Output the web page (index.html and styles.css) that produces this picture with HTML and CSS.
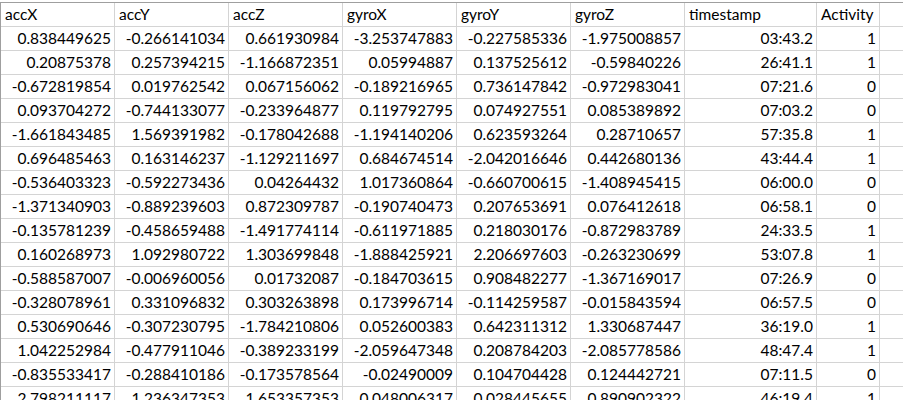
FILE: index.html
```html
<!DOCTYPE html>
<html>
<head>
<meta charset="utf-8">
<link rel="stylesheet" href="styles.css">
</head>
<body>
<div class="sheet">
  <div class="c h">accX</div><div class="c h">accY</div><div class="c h">accZ</div><div class="c h">gyroX</div><div class="c h">gyroY</div><div class="c h">gyroZ</div><div class="c h">timestamp</div><div class="c h">Activity</div><div class="c e"></div>

  <div class="c">0.838449625</div><div class="c">-0.266141034</div><div class="c">0.661930984</div><div class="c">-3.253747883</div><div class="c">-0.227585336</div><div class="c">-1.975008857</div><div class="c">03:43.2</div><div class="c">1</div><div class="c e"></div>

  <div class="c">0.20875378</div><div class="c">0.257394215</div><div class="c">-1.166872351</div><div class="c">0.05994887</div><div class="c">0.137525612</div><div class="c">-0.59840226</div><div class="c">26:41.1</div><div class="c">1</div><div class="c e"></div>

  <div class="c">-0.672819854</div><div class="c">0.019762542</div><div class="c">0.067156062</div><div class="c">-0.189216965</div><div class="c">0.736147842</div><div class="c">-0.972983041</div><div class="c">07:21.6</div><div class="c">0</div><div class="c e"></div>

  <div class="c">0.093704272</div><div class="c">-0.744133077</div><div class="c">-0.233964877</div><div class="c">0.119792795</div><div class="c">0.074927551</div><div class="c">0.085389892</div><div class="c">07:03.2</div><div class="c">0</div><div class="c e"></div>

  <div class="c">-1.661843485</div><div class="c">1.569391982</div><div class="c">-0.178042688</div><div class="c">-1.194140206</div><div class="c">0.623593264</div><div class="c">0.28710657</div><div class="c">57:35.8</div><div class="c">1</div><div class="c e"></div>

  <div class="c">0.696485463</div><div class="c">0.163146237</div><div class="c">-1.129211697</div><div class="c">0.684674514</div><div class="c">-2.042016646</div><div class="c">0.442680136</div><div class="c">43:44.4</div><div class="c">1</div><div class="c e"></div>

  <div class="c">-0.536403323</div><div class="c">-0.592273436</div><div class="c">0.04264432</div><div class="c">1.017360864</div><div class="c">-0.660700615</div><div class="c">-1.408945415</div><div class="c">06:00.0</div><div class="c">0</div><div class="c e"></div>

  <div class="c">-1.371340903</div><div class="c">-0.889239603</div><div class="c">0.872309787</div><div class="c">-0.190740473</div><div class="c">0.207653691</div><div class="c">0.076412618</div><div class="c">06:58.1</div><div class="c">0</div><div class="c e"></div>

  <div class="c">-0.135781239</div><div class="c">-0.458659488</div><div class="c">-1.491774114</div><div class="c">-0.611971885</div><div class="c">0.218030176</div><div class="c">-0.872983789</div><div class="c">24:33.5</div><div class="c">1</div><div class="c e"></div>

  <div class="c">0.160268973</div><div class="c">1.092980722</div><div class="c">1.303699848</div><div class="c">-1.888425921</div><div class="c">2.206697603</div><div class="c">-0.263230699</div><div class="c">53:07.8</div><div class="c">1</div><div class="c e"></div>

  <div class="c">-0.588587007</div><div class="c">-0.006960056</div><div class="c">0.01732087</div><div class="c">-0.184703615</div><div class="c">0.908482277</div><div class="c">-1.367169017</div><div class="c">07:26.9</div><div class="c">0</div><div class="c e"></div>

  <div class="c">-0.328078961</div><div class="c">0.331096832</div><div class="c">0.303263898</div><div class="c">0.173996714</div><div class="c">-0.114259587</div><div class="c">-0.015843594</div><div class="c">06:57.5</div><div class="c">0</div><div class="c e"></div>

  <div class="c">0.530690646</div><div class="c">-0.307230795</div><div class="c">-1.784210806</div><div class="c">0.052600383</div><div class="c">0.642311312</div><div class="c">1.330687447</div><div class="c">36:19.0</div><div class="c">1</div><div class="c e"></div>

  <div class="c">1.042252984</div><div class="c">-0.477911046</div><div class="c">-0.389233199</div><div class="c">-2.059647348</div><div class="c">0.208784203</div><div class="c">-2.085778586</div><div class="c">48:47.4</div><div class="c">1</div><div class="c e"></div>

  <div class="c">-0.835533417</div><div class="c">-0.288410186</div><div class="c">-0.173578564</div><div class="c">-0.02490009</div><div class="c">0.104704428</div><div class="c">0.124442721</div><div class="c">07:11.5</div><div class="c">0</div><div class="c e"></div>

  <div class="c">2.798211117</div><div class="c">1.236347353</div><div class="c">1.653357353</div><div class="c">0.048006317</div><div class="c">0.028445655</div><div class="c">0.890902322</div><div class="c">46:19.4</div><div class="c">1</div><div class="c e"></div>
</div>
</body>
</html>
```

FILE: styles.css
```css
html, body {
  margin: 0;
  padding: 0;
  background: #ffffff;
}
body {
  height: 400px;
  overflow: hidden;
}
.sheet {
  margin-top: 2px;
  display: grid;
  grid-template-columns: 114px 114px 114px 114px 114px 114px 132px 63px 1fr;
  border-top: 1px solid #9f9f9f;
  border-left: 1px solid #9f9f9f;
  font-family: "Lato", "Liberation Sans", sans-serif;
  font-size: 15.5px;
  color: #000000;
}
.c {
  box-sizing: border-box;
  height: 24px;
  line-height: 23px;
  border-right: 1px solid #d4d4d4;
  border-bottom: 1px solid #d4d4d4;
  padding: 0 3px 0 4px;
  text-align: right;
  white-space: nowrap;
  overflow: hidden;
}
.h {
  text-align: left;
}
.e {
  border-right: none;
}
```
